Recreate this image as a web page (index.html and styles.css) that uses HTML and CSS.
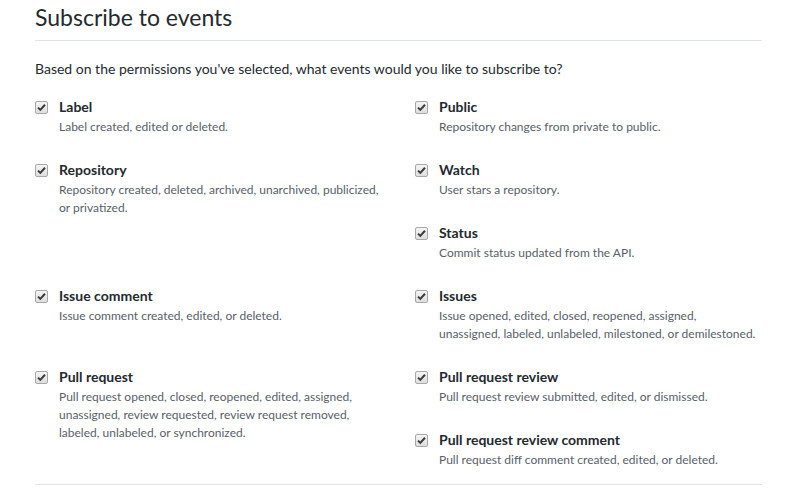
FILE: index.html
```html
<!DOCTYPE html>
<html lang="en">
<head>
    <meta charset="UTF-8">
    <title>Subscribe to events</title>
    <link rel="stylesheet" href="styles.css">
</head>
<body>
    <div class="container">
        <div class="subhead">
            <h2 class="subhead-heading">Subscribe to events</h2>
        </div>
        <p class="lead">Based on the permissions you've selected, what events would you like to subscribe to?</p>

        <div class="event-list">
            <label class="event">
                <span class="checkbox"><svg viewBox="0 0 11 11"><path d="M2 5.6l2.3 2.3L9 2.8" /></svg></span>
                <span class="event-body">
                    <span class="event-title">Label</span>
                    <span class="event-note">Label created, edited or deleted.</span>
                </span>
            </label>
            <label class="event">
                <span class="checkbox"><svg viewBox="0 0 11 11"><path d="M2 5.6l2.3 2.3L9 2.8" /></svg></span>
                <span class="event-body">
                    <span class="event-title">Public</span>
                    <span class="event-note">Repository changes from private to public.</span>
                </span>
            </label>
            <label class="event event--tall">
                <span class="checkbox"><svg viewBox="0 0 11 11"><path d="M2 5.6l2.3 2.3L9 2.8" /></svg></span>
                <span class="event-body">
                    <span class="event-title">Repository</span>
                    <span class="event-note">Repository created, deleted, archived, unarchived, publicized,<br>or privatized.</span>
                </span>
            </label>
            <label class="event">
                <span class="checkbox"><svg viewBox="0 0 11 11"><path d="M2 5.6l2.3 2.3L9 2.8" /></svg></span>
                <span class="event-body">
                    <span class="event-title">Watch</span>
                    <span class="event-note">User stars a repository.</span>
                </span>
            </label>
            <label class="event">
                <span class="checkbox"><svg viewBox="0 0 11 11"><path d="M2 5.6l2.3 2.3L9 2.8" /></svg></span>
                <span class="event-body">
                    <span class="event-title">Status</span>
                    <span class="event-note">Commit status updated from the API.</span>
                </span>
            </label>
            <label class="event">
                <span class="checkbox"><svg viewBox="0 0 11 11"><path d="M2 5.6l2.3 2.3L9 2.8" /></svg></span>
                <span class="event-body">
                    <span class="event-title">Issue comment</span>
                    <span class="event-note">Issue comment created, edited, or deleted.</span>
                </span>
            </label>
            <label class="event">
                <span class="checkbox"><svg viewBox="0 0 11 11"><path d="M2 5.6l2.3 2.3L9 2.8" /></svg></span>
                <span class="event-body">
                    <span class="event-title">Issues</span>
                    <span class="event-note">Issue opened, edited, closed, reopened, assigned,<br>unassigned, labeled, unlabeled, milestoned, or demilestoned.</span>
                </span>
            </label>
            <label class="event event--tall">
                <span class="checkbox"><svg viewBox="0 0 11 11"><path d="M2 5.6l2.3 2.3L9 2.8" /></svg></span>
                <span class="event-body">
                    <span class="event-title">Pull request</span>
                    <span class="event-note">Pull request opened, closed, reopened, edited, assigned,<br>unassigned, review requested, review request removed,<br>labeled, unlabeled, or synchronized.</span>
                </span>
            </label>
            <label class="event">
                <span class="checkbox"><svg viewBox="0 0 11 11"><path d="M2 5.6l2.3 2.3L9 2.8" /></svg></span>
                <span class="event-body">
                    <span class="event-title">Pull request review</span>
                    <span class="event-note">Pull request review submitted, edited, or dismissed.</span>
                </span>
            </label>
            <label class="event">
                <span class="checkbox"><svg viewBox="0 0 11 11"><path d="M2 5.6l2.3 2.3L9 2.8" /></svg></span>
                <span class="event-body">
                    <span class="event-title">Pull request review comment</span>
                    <span class="event-note">Pull request diff comment created, edited, or deleted.</span>
                </span>
            </label>
        </div>
    </div>
</body>
</html>
```
FILE: styles.css
```css
* {
    margin: 0;
    padding: 0;
    box-sizing: border-box;
}
body {
    font-family: Lato, "Liberation Sans", sans-serif;
    font-size: 14px;
    color: #24292e;
    background-color: #fff;
}
.container {
    width: 727px;
    margin-left: 35px;
    padding-top: 2px;
}
.subhead {
    padding-bottom: 8px;
    border-bottom: 1px solid #e1e4e8;
}
.subhead-heading {
    font-size: 23px;
    font-weight: normal;
    line-height: 30px;
}
.lead {
    margin-top: 18px;
    line-height: 20px;
}
.event-list {
    display: grid;
    grid-template-columns: 380px 1fr;
    row-gap: 24px;
    margin-top: 18px;
    padding-bottom: 15px;
    border-bottom: 1px solid #e1e4e8;
}
.event {
    display: flex;
    align-items: flex-start;
    cursor: pointer;
}
.event--tall {
    grid-row: span 2;
}
.checkbox {
    flex: none;
    width: 13px;
    height: 13px;
    margin-top: 4px;
    margin-right: 11px;
    border: 1px solid #a8a8a8;
    border-radius: 2px;
    background: linear-gradient(#f4f4f4, #dedede);
}
.checkbox svg {
    display: block;
    width: 11px;
    height: 11px;
    fill: none;
    stroke: #3b3b3b;
    stroke-width: 2;
}
.event-body {
    display: flex;
    flex-direction: column;
}
.event-title {
    font-weight: bold;
    line-height: 20px;
    margin-bottom: 1px;
}
.event-note {
    font-size: 12px;
    line-height: 18px;
    color: #586069;
    white-space: nowrap;
}
```
